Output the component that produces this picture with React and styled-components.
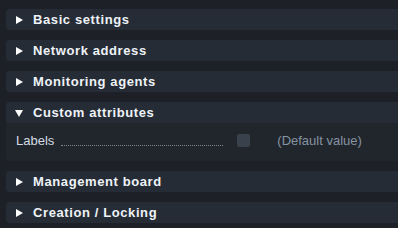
import React from "react";
import styled, { createGlobalStyle } from "styled-components";

const Global = createGlobalStyle`
  html, body { margin: 0; padding: 0; background: #1d2127; }
  body { font-family: "Liberation Sans", Arial, sans-serif; }
`;

const Page = styled.div`
  width: 398px;
  height: 228px;
  padding: 9px 0 0 6px;
  box-sizing: border-box;
  display: flex;
  flex-direction: column;
  gap: 10px;
  overflow: hidden;
`;

const Section = styled.div`
  background: ${(p) => (p.$open ? "#21262d" : "transparent")};
  border-radius: 4px 0 0 4px;
  margin-right: -4px;
  padding-bottom: ${(p) => (p.$open ? "10px" : "0")};
`;

const Header = styled.div`
  height: 21px;
  display: flex;
  align-items: center;
  background: #262c35;
  border-radius: 4px 0 0 4px;
  padding-left: 9px;
  color: #eef3f8;
  font-size: 13px;
  font-weight: bold;
  letter-spacing: 0.6px;
`;

const Arrow = styled.svg`
  width: 8px;
  height: 8px;
  margin-right: 10px;
  fill: #ffffff;
`;

const Row = styled.div`
  display: flex;
  align-items: center;
  height: 22px;
  margin-top: 6px;
  padding-left: 10px;
  font-size: 13px;
`;

const Label = styled.span`
  color: #d4dce4;
`;

const Dots = styled.span`
  width: 162px;
  margin-left: 7px;
  height: 1px;
  align-self: center;
  margin-top: 9px;
  border-bottom: 1px dotted #7b8591;
`;

const Check = styled.span`
  width: 13px;
  height: 13px;
  margin-left: 14px;
  border-radius: 2px;
  background: #38414c;
`;

const Default = styled.span`
  margin-left: 27px;
  color: #8593a1;
`;

const sections = [
  { title: "Basic settings" },
  { title: "Network address" },
  { title: "Monitoring agents" },
  { title: "Custom attributes", open: true },
  { title: "Management board" },
  { title: "Creation / Locking" },
];

export default function App() {
  return (
    <>
      <Global />
      <Page>
        {sections.map((s) => (
          <Section key={s.title} $open={s.open}>
            <Header>
              <Arrow viewBox="0 0 8 8">
                {s.open ? (
                  <polygon points="0,1 8,1 4,8" />
                ) : (
                  <polygon points="1,0 8,4 1,8" />
                )}
              </Arrow>
              {s.title}
            </Header>
            {s.open && (
              <Row>
                <Label>Labels</Label>
                <Dots />
                <Check />
                <Default>(Default value)</Default>
              </Row>
            )}
          </Section>
        ))}
      </Page>
    </>
  );
}
